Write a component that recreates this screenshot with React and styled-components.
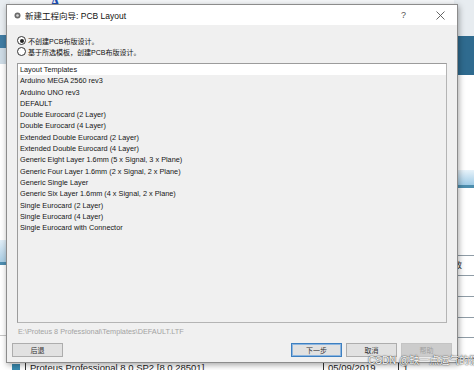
import styled, { createGlobalStyle } from 'styled-components'

const GlobalStyle = createGlobalStyle`
  html, body {
    margin: 0;
    padding: 0;
    background: #ffffff;
  }
  * {
    box-sizing: border-box;
  }
`

const templates = [
    'Layout Templates',
    'Arduino MEGA 2560 rev3',
    'Arduino UNO rev3',
    'DEFAULT',
    'Double Eurocard (2 Layer)',
    'Double Eurocard (4 Layer)',
    'Extended Double Eurocard (2 Layer)',
    'Extended Double Eurocard (4 Layer)',
    'Generic Eight Layer 1.6mm (5 x Signal, 3 x Plane)',
    'Generic Four Layer 1.6mm (2 x Signal, 2 x Plane)',
    'Generic Single Layer',
    'Generic Six Layer 1.6mm (4 x Signal, 2 x Plane)',
    'Single Eurocard (2 Layer)',
    'Single Eurocard (4 Layer)',
    'Single Eurocard with Connector',
]

const tableLines = [255, 275, 296, 317, 337, 358]

// app that sits behind the dialog
function BackgroundApp() {
    return (
        <BackApp>
            <Panes>
                <SidePane>
                    <Stripe $h={35} $bg="#e8edf1" />
                    <Stripe $h={13} $bg="#3f7ca3" />
                    <Stripe $h={16} $bg="#cddbe5" />
                    <Stripe $h={176} $bg="#ffffff" />
                    <Stripe $h={22} $bg="linear-gradient(#e2eff8, #a9cde4)" />
                    <Stripe $h={3} $bg="#4d8db0" />
                    <Stripe $h={70} $bg="#ffffff" />
                    <Stripe $h={1} $bg="#c6c6c6" />
                </SidePane>
                <CenterPane>
                    <TopTools>
                        <ToolGlyph>A</ToolGlyph>
                    </TopTools>
                </CenterPane>
                <RightPane>
                    <Stripe $h={36} $bg="#e7ecf0" />
                    <Stripe $h={39} $bg="#2f6b8f" />
                    <Stripe $h={95} $bg="#ffffff" />
                    <Stripe $h={15} $bg="linear-gradient(#e8f3fa, #9fcbe6)" />
                    <Stripe $h={3} $bg="#4d8eae" />
                    <TableArea>
                        {tableLines.map((y) => (
                            <TableLine key={y} style={{ top: y - 188 }} />
                        ))}
                        <SideGlyph>改</SideGlyph>
                    </TableArea>
                </RightPane>
            </Panes>
            <BottomRow>
                <AppIcon />
                <Cell $w={298}>Proteus Professional 8.0 SP2 [8.0.28501]</Cell>
                <Cell $w={75}>05/09/2019</Cell>
                <Cell>1</Cell>
            </BottomRow>
        </BackApp>
    )
}

function Radio({ checked, label }) {
    return (
        <RadioRow>
            <RadioCircle $checked={checked} />
            <span>{label}</span>
        </RadioRow>
    )
}

export default function App() {
    return (
        <Desktop>
            <GlobalStyle />
            <BackgroundApp />

            <Window>
                <TitleBar>
                    <svg width="7" height="7" viewBox="0 0 7 7">
                        <circle cx="3.5" cy="3.5" r="3" fill="#6b6b6b" />
                        <circle cx="3.5" cy="3.5" r="1.3" fill="#d8d8d8" />
                    </svg>
                    <Title>新建工程向导: PCB Layout</Title>
                    <TitleButton>
                        <span>?</span>
                    </TitleButton>
                    <TitleButton>
                        <svg width="9" height="9" viewBox="0 0 9 9">
                            <path d="M0.5 0.5 L8.5 8.5 M8.5 0.5 L0.5 8.5" stroke="#555" strokeWidth="0.9" />
                        </svg>
                    </TitleButton>
                </TitleBar>

                <Body>
                    <RadioGroup>
                        <Radio checked label="不创建PCB布版设计。" />
                        <Radio label="基于所选模板，创建PCB布版设计。" />
                    </RadioGroup>

                    <ListBox>
                        {templates.map((t, i) => (
                            <ListItem key={t} $selected={i === 0}>{t}</ListItem>
                        ))}
                    </ListBox>

                    <PathText>E:\Proteus 8 Professional\Templates\DEFAULT.LTF</PathText>

                    <ButtonRow>
                        <Button>后退</Button>
                        <Spacer />
                        <Button $primary>下一步</Button>
                        <Button>取消</Button>
                        <Button disabled>帮助</Button>
                    </ButtonRow>
                </Body>
            </Window>

            <Watermark>CSDN @缺一点运气的猫</Watermark>
        </Desktop>
    )
}

const Desktop = styled.div`
    position: relative;
    width: 474px;
    height: 370px;
    overflow: hidden;
    font-family: "Liberation Sans", "Noto Sans CJK SC", sans-serif;
`
const BackApp = styled.div`
    display: flex;
    flex-direction: column;
    width: 100%;
    height: 100%;
    background: #ffffff;
`
const Panes = styled.div`
    display: flex;
    height: 362px;
`
const SidePane = styled.div`
    display: flex;
    flex-direction: column;
    width: 10px;
`
const CenterPane = styled.div`
    flex: 1;
    background: #f4f6f8;
`
const TopTools = styled.div`
    display: flex;
    height: 6px;
    padding-left: 40px;
    align-items: flex-start;
`
const ToolGlyph = styled.span`
    font: bold 14px "Liberation Serif", serif;
    line-height: 6px;
    color: #1d4fb5;
`
const RightPane = styled.div`
    display: flex;
    flex-direction: column;
    width: 20px;
`
const Stripe = styled.div`
    height: ${(p) => p.$h}px;
    flex-shrink: 0;
    background: ${(p) => p.$bg};
`
const TableArea = styled.div`
    position: relative;
    flex: 1;
    background: #ffffff;
`
const TableLine = styled.div`
    position: absolute;
    left: 0;
    right: 0;
    height: 1px;
    background: #8f9ca6;
`
const SideGlyph = styled.span`
    position: absolute;
    top: 71px;
    left: 0;
    font-size: 8px;
    color: #333;
`
const BottomRow = styled.div`
    display: flex;
    align-items: flex-start;
    height: 8px;
    padding-left: 12px;
    overflow: hidden;
    background: #ffffff;
`
const AppIcon = styled.div`
    width: 8px;
    height: 8px;
    margin-top: 2px;
    margin-right: 5px;
    background: #3a8bb0;
`
const Cell = styled.div`
    width: ${(p) => (p.$w ? `${p.$w}px` : 'auto')};
    border-left: 1px solid #333;
    padding-left: 4px;
    font-size: 9.5px;
    line-height: 11px;
    color: #1a1a1a;
    white-space: nowrap;
`

const Window = styled.section`
    position: absolute;
    left: 6px;
    top: 4px;
    width: 452px;
    height: 359px;
    display: flex;
    flex-direction: column;
    border: 1px solid #8c8c8c;
    background: #f0f0f0;
    box-shadow: 1px 2px 6px rgba(0, 0, 0, 0.35);
`
const TitleBar = styled.header`
    display: flex;
    align-items: center;
    gap: 4px;
    height: 20px;
    padding-left: 7px;
    background: #ffffff;
`
const Title = styled.span`
    flex: 1;
    font-size: 8.5px;
    color: #111;
    white-space: nowrap;
`
const TitleButton = styled.div`
    display: flex;
    align-items: center;
    justify-content: center;
    width: 33px;
    height: 20px;
    font-size: 9px;
    color: #555;
`
const Body = styled.div`
    flex: 1;
    display: flex;
    flex-direction: column;
    padding: 10px 10px 5px 10px;
    min-height: 0;
`
const RadioGroup = styled.div`
    display: flex;
    flex-direction: column;
`
const RadioRow = styled.label`
    display: flex;
    align-items: center;
    gap: 2px;
    height: 11px;
    font-size: 7px;
    color: #111;
    white-space: nowrap;
`
const RadioCircle = styled.span`
    position: relative;
    width: 9px;
    height: 9px;
    border: 1px solid #333;
    border-radius: 50%;
    background: #fff;

    &::after {
        content: '';
        display: ${(p) => (p.$checked ? 'block' : 'none')};
        position: absolute;
        left: 1.5px;
        top: 1.5px;
        width: 4px;
        height: 4px;
        border-radius: 50%;
        background: #222;
    }
`
const ListBox = styled.div`
    flex: 1;
    margin-top: 6px;
    border: 1px solid #9c9c9c;
    border-right-color: #b4b4b4;
    border-bottom-color: #b4b4b4;
    background: #f0f0f0;
    overflow: hidden;
`
const ListItem = styled.div`
    height: 11.3px;
    line-height: 11.3px;
    padding-left: 2px;
    font-size: 7.3px;
    color: #161616;
    white-space: nowrap;
    background: ${(p) => (p.$selected ? '#ffffff' : 'transparent')};
`
const PathText = styled.div`
    height: 11px;
    margin-top: 3px;
    padding-left: 1px;
    line-height: 11px;
    font-size: 7.3px;
    color: #a3a3a3;
    white-space: nowrap;
`
const ButtonRow = styled.div`
    display: flex;
    gap: 4px;
    margin: 6px -5px 0;
`
const Spacer = styled.div`
    flex: 1;
`
const Button = styled.button`
    width: 51px;
    height: 14px;
    padding: 0;
    border: 1px solid ${(p) => (p.$primary ? '#3d7fc0' : p.disabled ? '#c4c4c4' : '#adadad')};
    box-shadow: ${(p) => (p.$primary ? 'inset 0 0 0 1px #8db6e0' : 'none')};
    background: ${(p) => (p.disabled ? '#cccccc' : '#e1e1e1')};
    color: ${(p) => (p.disabled ? '#a0a0a0' : '#333')};
    font-family: "Noto Sans CJK SC", sans-serif;
    font-size: 7px;
    line-height: 12px;
`
const Watermark = styled.div`
    position: absolute;
    left: 368px;
    top: 355px;
    font-size: 10px;
    line-height: 12px;
    color: #fbfbfb;
    text-shadow: 0 0 1px rgba(0, 0, 0, 0.85), 0 0 2px rgba(0, 0, 0, 0.5);
    white-space: nowrap;
    font-family: "Liberation Sans", "Noto Sans CJK SC", sans-serif;
`
